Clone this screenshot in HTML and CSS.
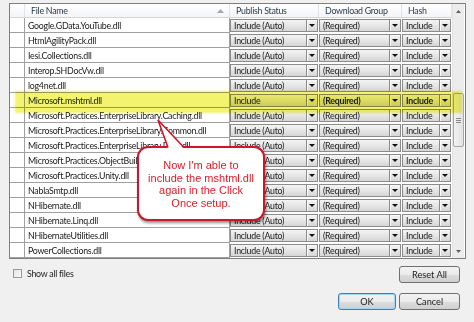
FILE: index.html
```html
<!DOCTYPE html>
<html lang="en">
<head>
    <meta charset="UTF-8">
    <title>Application Files</title>
    <link rel="stylesheet" href="styles.css">
</head>
<body>
<div class="dialog">
    <div class="files">
        <div class="grid">
            <div class="row head">
                <div class="cell sel"></div>
                <div class="cell name">File Name
                    <svg class="sort" width="7" height="4" viewBox="0 0 7 4"><path d="M0 4 L3.5 0 L7 4 Z" fill="#a8a8a8"/></svg>
                </div>
                <div class="cell">Publish Status</div>
                <div class="cell">Download Group</div>
                <div class="cell">Hash</div>
            </div>

            <div class="row">
                <div class="cell sel"></div>
                <div class="cell name">Google.GData.YouTube.dll</div>
                <div class="cell"><div class="combo"><span>Include (Auto)</span><i class="drop"></i></div></div>
                <div class="cell"><div class="combo"><span>(Required)</span><i class="drop"></i></div></div>
                <div class="cell"><div class="combo"><span>Include</span><i class="drop"></i></div></div>
            </div>
            <div class="row">
                <div class="cell sel"></div>
                <div class="cell name">HtmlAgilityPack.dll</div>
                <div class="cell"><div class="combo"><span>Include (Auto)</span><i class="drop"></i></div></div>
                <div class="cell"><div class="combo"><span>(Required)</span><i class="drop"></i></div></div>
                <div class="cell"><div class="combo"><span>Include</span><i class="drop"></i></div></div>
            </div>
            <div class="row">
                <div class="cell sel"></div>
                <div class="cell name">Iesi.Collections.dll</div>
                <div class="cell"><div class="combo"><span>Include (Auto)</span><i class="drop"></i></div></div>
                <div class="cell"><div class="combo"><span>(Required)</span><i class="drop"></i></div></div>
                <div class="cell"><div class="combo"><span>Include</span><i class="drop"></i></div></div>
            </div>
            <div class="row">
                <div class="cell sel"></div>
                <div class="cell name">Interop.SHDocVw.dll</div>
                <div class="cell"><div class="combo"><span>Include (Auto)</span><i class="drop"></i></div></div>
                <div class="cell"><div class="combo"><span>(Required)</span><i class="drop"></i></div></div>
                <div class="cell"><div class="combo"><span>Include</span><i class="drop"></i></div></div>
            </div>
            <div class="row">
                <div class="cell sel"></div>
                <div class="cell name">log4net.dll</div>
                <div class="cell"><div class="combo"><span>Include (Auto)</span><i class="drop"></i></div></div>
                <div class="cell"><div class="combo"><span>(Required)</span><i class="drop"></i></div></div>
                <div class="cell"><div class="combo"><span>Include</span><i class="drop"></i></div></div>
            </div>
            <div class="row changed">
                <div class="cell sel"></div>
                <div class="cell name">Microsoft.mshtml.dll</div>
                <div class="cell"><div class="combo"><span>Include</span><i class="drop"></i></div></div>
                <div class="cell"><div class="combo"><span class="bold">(Required)</span><i class="drop"></i></div></div>
                <div class="cell"><div class="combo"><span class="bold">Include</span><i class="drop"></i></div></div>
            </div>
            <div class="row">
                <div class="cell sel"></div>
                <div class="cell name">Microsoft.Practices.EnterpriseLibrary.Caching.dll</div>
                <div class="cell"><div class="combo"><span>Include (Auto)</span><i class="drop"></i></div></div>
                <div class="cell"><div class="combo"><span>(Required)</span><i class="drop"></i></div></div>
                <div class="cell"><div class="combo"><span>Include</span><i class="drop"></i></div></div>
            </div>
            <div class="row">
                <div class="cell sel"></div>
                <div class="cell name">Microsoft.Practices.EnterpriseLibrary.Common.dll</div>
                <div class="cell"><div class="combo"><span>Include (Auto)</span><i class="drop"></i></div></div>
                <div class="cell"><div class="combo"><span>(Required)</span><i class="drop"></i></div></div>
                <div class="cell"><div class="combo"><span>Include</span><i class="drop"></i></div></div>
            </div>
            <div class="row">
                <div class="cell sel"></div>
                <div class="cell name">Microsoft.Practices.EnterpriseLibrary.Data.dll</div>
                <div class="cell"><div class="combo"><span>Include (Auto)</span><i class="drop"></i></div></div>
                <div class="cell"><div class="combo"><span>(Required)</span><i class="drop"></i></div></div>
                <div class="cell"><div class="combo"><span>Include</span><i class="drop"></i></div></div>
            </div>
            <div class="row">
                <div class="cell sel"></div>
                <div class="cell name">Microsoft.Practices.ObjectBuilder2.dll</div>
                <div class="cell"><div class="combo"><span>Include (Auto)</span><i class="drop"></i></div></div>
                <div class="cell"><div class="combo"><span>(Required)</span><i class="drop"></i></div></div>
                <div class="cell"><div class="combo"><span>Include</span><i class="drop"></i></div></div>
            </div>
            <div class="row">
                <div class="cell sel"></div>
                <div class="cell name">Microsoft.Practices.Unity.dll</div>
                <div class="cell"><div class="combo"><span>Include (Auto)</span><i class="drop"></i></div></div>
                <div class="cell"><div class="combo"><span>(Required)</span><i class="drop"></i></div></div>
                <div class="cell"><div class="combo"><span>Include</span><i class="drop"></i></div></div>
            </div>
            <div class="row">
                <div class="cell sel"></div>
                <div class="cell name">NablaSmtp.dll</div>
                <div class="cell"><div class="combo"><span>Include (Auto)</span><i class="drop"></i></div></div>
                <div class="cell"><div class="combo"><span>(Required)</span><i class="drop"></i></div></div>
                <div class="cell"><div class="combo"><span>Include</span><i class="drop"></i></div></div>
            </div>
            <div class="row">
                <div class="cell sel"></div>
                <div class="cell name">NHibernate.dll</div>
                <div class="cell"><div class="combo"><span>Include (Auto)</span><i class="drop"></i></div></div>
                <div class="cell"><div class="combo"><span>(Required)</span><i class="drop"></i></div></div>
                <div class="cell"><div class="combo"><span>Include</span><i class="drop"></i></div></div>
            </div>
            <div class="row">
                <div class="cell sel"></div>
                <div class="cell name">NHibernate.Linq.dll</div>
                <div class="cell"><div class="combo"><span>Include (Auto)</span><i class="drop"></i></div></div>
                <div class="cell"><div class="combo"><span>(Required)</span><i class="drop"></i></div></div>
                <div class="cell"><div class="combo"><span>Include</span><i class="drop"></i></div></div>
            </div>
            <div class="row">
                <div class="cell sel"></div>
                <div class="cell name">NHibernateUtilities.dll</div>
                <div class="cell"><div class="combo"><span>Include (Auto)</span><i class="drop"></i></div></div>
                <div class="cell"><div class="combo"><span>(Required)</span><i class="drop"></i></div></div>
                <div class="cell"><div class="combo"><span>Include</span><i class="drop"></i></div></div>
            </div>
            <div class="row">
                <div class="cell sel"></div>
                <div class="cell name">PowerCollections.dll</div>
                <div class="cell"><div class="combo"><span>Include (Auto)</span><i class="drop"></i></div></div>
                <div class="cell"><div class="combo"><span>(Required)</span><i class="drop"></i></div></div>
                <div class="cell"><div class="combo"><span>Include</span><i class="drop"></i></div></div>
            </div>
        </div>

        <div class="vscroll">
            <div class="arrow"><svg width="5" height="3" viewBox="0 0 5 3"><path d="M0 3 L2.5 0 L5 3 Z" fill="#606060"/></svg></div>
            <div class="track">
                <div class="thumb"><span class="grip"></span></div>
            </div>
            <div class="arrow"><svg width="5" height="3" viewBox="0 0 5 3"><path d="M0 0 L2.5 3 L5 0 Z" fill="#606060"/></svg></div>
        </div>
    </div>

    <div class="footer">
        <label class="check"><span class="box"></span>Show all files</label>
        <button class="btn">Reset All</button>
    </div>
    <div class="actions">
        <button class="btn default">OK</button>
        <button class="btn">Cancel</button>
    </div>

    <!-- annotation layer -->
    <div class="marker"></div>
    <div class="callout">
        <svg class="tail" width="36" height="31" viewBox="0 0 36 31">
            <path d="M14 30 L4 1 L30 30 Z" fill="#fff"/>
            <path d="M14 28.5 L4 1 L30 28.5" fill="none" stroke="#c8192c" stroke-width="1.6" stroke-linejoin="miter"/>
        </svg>
        Now I'm able to<br>
        include the mshtml.dll<br>
        again in the Click<br>
        Once setup.
    </div>
</div>
</body>
</html>
```

FILE: styles.css
```css
body {
    margin: 0;
    background-color: #f0f0f0;
    font-family: Lato, "Noto Sans", sans-serif;
    font-size: 8.8px;
    letter-spacing: -0.25px;
    color: #1a1a1a;
    overflow: hidden;
}
.dialog {
    position: relative;
    width: 474px;
    height: 322px;
}
.files {
    display: flex;
    margin: 3px 0 0 9px;
    width: 455px;
    border: 1px solid #7f7f7f;
    background-color: #fff;
}
.grid {
    width: 442px;
}
.row {
    display: grid;
    grid-template-columns: 15px 205px 89px 83px 50px;
    height: 15px;
}
.cell {
    display: flex;
    align-items: center;
    overflow: hidden;
    white-space: nowrap;
    padding: 1px 1px 1px 0;
    box-sizing: border-box;
}
.cell.sel,
.cell.name {
    border-right: 1px solid #a0a0a0;
    border-bottom: 1px solid #a0a0a0;
}
.cell.name {
    padding-left: 3px;
}
.head {
    height: 14px;
    background: linear-gradient(#ffffff, #f3f4f6);
    color: #2a3a4a;
}
.head .cell {
    border-right: 1px solid #e2e3e6;
    border-bottom: 1px solid #d5d5d5;
    padding-left: 6px;
}
.head .cell.sel {
    padding-left: 0;
}
.head .cell.name {
    padding-left: 6px;
    position: relative;
}
.sort {
    position: absolute;
    right: 5px;
    top: 5px;
}
.combo {
    display: flex;
    width: 100%;
    height: 13px;
    box-sizing: border-box;
    border: 1px solid #8b8b8b;
    background: linear-gradient(#f4f4f4, #e6e6e6 50%, #d6d6d6);
}
.combo span {
    flex: 1;
    padding-left: 3px;
    line-height: 11px;
}
.bold {
    font-weight: bold;
}
.drop {
    position: relative;
    width: 10px;
    border-left: 1px solid #8b8b8b;
    box-shadow: inset 1px 1px 0 #fafafa;
}
.drop::after {
    content: "";
    position: absolute;
    left: 2px;
    top: 4px;
    border-left: 3px solid transparent;
    border-right: 3px solid transparent;
    border-top: 3px solid #111;
}
.vscroll {
    display: flex;
    flex-direction: column;
    width: 11px;
    border-left: 1px solid #e4e4e4;
    background-color: #ececec;
}
.arrow {
    display: flex;
    justify-content: center;
    align-items: center;
    height: 14px;
}
.track {
    flex: 1;
}
.thumb {
    display: flex;
    justify-content: center;
    align-items: center;
    margin: 75px 0 0 0;
    height: 54px;
    box-sizing: border-box;
    border: 1px solid #a8a8a8;
    border-radius: 2px;
    background: linear-gradient(90deg, #f2f2f2, #e2e2e2);
}
.grip {
    width: 5px;
    height: 5px;
    background: repeating-linear-gradient(#8a8a8a 0 1px, transparent 1px 2px);
}
.footer {
    display: flex;
    justify-content: space-between;
    align-items: flex-start;
    margin: 7px 14px 0 13px;
}
.check {
    display: flex;
    align-items: center;
    gap: 5px;
    margin-top: 2px;
    color: #222;
}
.box {
    width: 7px;
    height: 7px;
    border: 1px solid #9a9a9a;
    background: linear-gradient(135deg, #e4e4e4, #fafafa);
}
.actions {
    display: flex;
    justify-content: flex-end;
    gap: 3px;
    margin: 10px 14px 0 0;
}
.btn {
    width: 61px;
    height: 17px;
    padding: 0;
    font: inherit;
    font-size: 9.2px;
    color: #1a1a1a;
    border: 1px solid #707070;
    border-radius: 3px;
    background: linear-gradient(#f2f2f2, #ebebeb 50%, #dddddd 51%, #cfcfcf);
}
.btn.default {
    width: 58px;
    border-color: #3c7fb1;
    box-shadow: inset 0 0 0 1px #a6d6f2;
}
.marker {
    position: absolute;
    left: 15px;
    top: 88px;
    width: 447px;
    height: 22px;
    background-color: #f0f04a;
    mix-blend-mode: multiply;
    opacity: 0.8;
    filter: blur(1px);
}
.callout {
    position: absolute;
    left: 137px;
    top: 143px;
    width: 128px;
    height: 75px;
    box-sizing: border-box;
    padding-top: 11px;
    border: 2px solid #c8192c;
    border-radius: 11px;
    background-color: #fff;
    box-shadow: 1px 2px 3px rgba(0, 0, 0, 0.45);
    font-family: "Liberation Sans", Arial, sans-serif;
    font-size: 11px;
    letter-spacing: 0;
    line-height: 12.5px;
    color: #d9202e;
    text-align: center;
}
.tail {
    position: absolute;
    left: 15px;
    top: -29px;
}
```
